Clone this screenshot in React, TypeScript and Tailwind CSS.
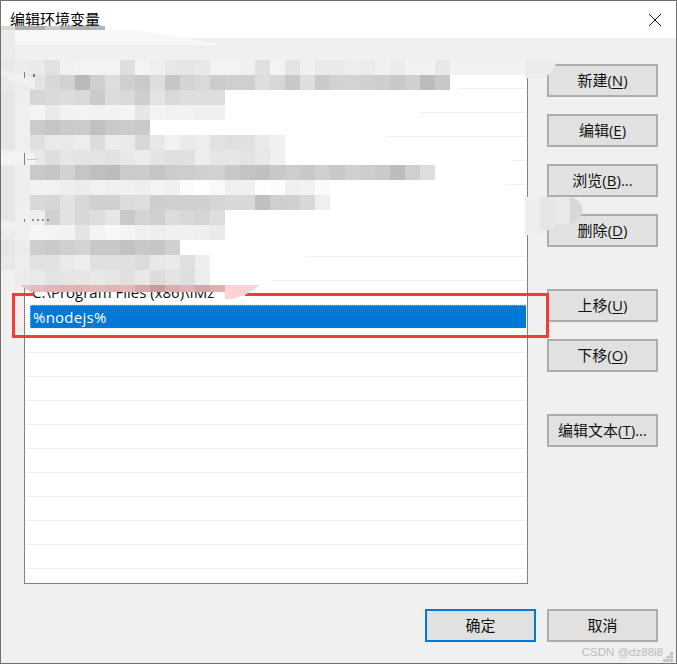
import { useState } from "react";

const FONT = "font-['Open_Sans','Noto_Sans_CJK_SC',sans-serif]";

// Pixelated privacy blur over the top of the list. 15px cells starting at x=0, grey levels in hex.
const MOSAIC: { y: number; cells: string }[] = [
  { y: 60, cells: "e8 ec ea e1 f1 f3 f3 f3 de f3 ef e7 e5 e8 f3 f3 f0 e0 f3 e4 f0 ea ea ed eb f0 ec f2 f2 e8 f2 f2 f2 f2 f2" },
  { y: 75, cells: "e8 ec e3 d8 d2 ba cf dd d0 ca de c6 d4 d9 cc cf cf dd d7 c8 de ca d2 d3 d0 ce c8 d0 bc c8" },
  { y: 90, cells: "e6 ee d5 d9 dc d9 ca dc d9 ce e3 d9 de de dd" },
  { y: 105, cells: "e6 ef f4 ea f2 f3 f1 f2 f4 e6 f3 f1 f2 f0 f0" },
  { y: 120, cells: "e6 ef cb c5 ca cc c1 ca cc ca" },
  { y: 135, cells: "e6 ef e0 e9 e9 ed dc ec e9 d8 e8 f1 ea ed e2 df e0 ea f0" },
  { y: 150, cells: "f0 f0 e8 dd e6 e4 e4 e2 e8 ec e4 df e0 ed e5 e6 e3 e8 f0" },
  { y: 165, cells: "e6 ee c9 c6 d2 c5 bf bc cb cc c5 cc cd d0 d1 c8 c3 c0 c8 cd c8 d0 c8 d0 cd ca bc cf dd" },
  { y: 180, cells: "e6 ee f2 f1 ee ec f1 ef f0 ee f3 f0 fc fe f9 ef f0 fe fc f0 f1 fa" },
  { y: 195, cells: "e6 ee d8 d6 e2 d8 d0 d0 dc de ce d0 cf d0 d5 d8 d8 c0 cf d0 d8 ef" },
  { y: 210, cells: "e6 f0 ee d0 e2 d8 dd e6 c9 d4 cf dc d8 d5 dd" },
  { y: 225, cells: "ec f0 f6 f4 f2 e4 f3 f8 f4 f0 ee f0 f0 ee ea" },
  { y: 240, cells: "e6 ec ce ca cf d4 c8 c8 c2 c8 c6 d0" },
  { y: 255, cells: "e8 ee e2 e2 ea ee df df e0 dc e8 ea e0 ee" },
  { y: 270, cells: "f0 ec e9 e3 e5 e6 e8 e6 e0 e8 dc e3 de ed" },
];

const TOP_STRIP = ["d8", "ad", "ad", "c8", "b0", "ad", "b5"];
const PINK = ["e4bcbc", "e2b6b6", "e2b4b4", "e0b2b2", "e4b8b8", "e0b2b2", "e4b8b8", "d8a8a8", "c99c9c", "dcaeae", "deb4b4", "d4a8a8", "deb0b0", "e2b8b8"];

// Stretches of the white smear that hide the row separators
const SMEARS: [number, number, number][] = [
  [88, 225, 458],
  [112, 225, 420],
  [136, 150, 386],
  [160, 285, 512],
  [184, 330, 505],
  [208, 330, 526],
  [232, 225, 526],
  [256, 180, 305],
  [280, 210, 271],
];

function Overlay() {
  return (
    <svg className="absolute -left-px -top-px pointer-events-none" width="677" height="664" viewBox="0 0 677 664">
      {SMEARS.map(([y, x1, x2]) => (
        <rect key={y} x={x1} y={y} width={x2 - x1} height="1" fill="#fff" />
      ))}

      {/* top smear, under the title */}
      <rect x="0" y="30" width="15" height="30" fill="#ebebeb" />
      <polygon points="15,30 135,30 225,45 15,45" fill="#f7f7f7" />
      {TOP_STRIP.map((v, i) => (
        <rect key={i} x={i * 15} y="26" width="15" height="4" fill={`#${v}${v}${v}`} />
      ))}

      {MOSAIC.map((row) =>
        row.cells.split(" ").map((v, i) => (
          <rect key={`${row.y}-${i}`} x={i * 15} y={row.y} width="15" height="15" fill={`#${v}${v}${v}`} />
        ))
      )}

      {/* patches at the edge of the list */}
      <polygon points="525,60 558,60 553,70 545,78 525,78" fill="#ececec" />
      <rect x="525" y="197" width="15" height="38" fill="#eeeeee" />
      <rect x="540" y="197" width="15" height="33" fill="#e6e6e6" />
      <path d="M555 197H570V224H555Z" fill="#e9e9e9" />
      <path d="M570 197C578 198 583 204 583 212L575 222L570 224Z" fill="#d8d8d8" />

      {/* bits of the window that show through the blur */}
      <rect x="0" y="220" width="1" height="18" fill="#707070" />
      <rect x="0" y="268" width="1" height="32" fill="#707070" />
      <polygon points="0,225 8,235 20,222 1,220" fill="#f0f0f0" />
      <polygon points="0,70 35,78 35,90 0,75" fill="#f0f0f0" />
      <rect x="24" y="72" width="1" height="6" fill="#808088" />
      <rect x="33" y="74" width="2" height="3" fill="#8a7a50" />
      <rect x="0" y="153" width="35" height="12" fill="#f3f3f3" />
      <rect x="24" y="153" width="1" height="12" fill="#808088" />
      <rect x="27" y="159" width="10" height="1" fill="#c8c8c8" />
      <rect x="24" y="219" width="1" height="3" fill="#808088" />
      <path d="M32 220H49" stroke="#3a3a3a" strokeWidth="1" strokeDasharray="2 3" fill="none" />

      {/* red annotation box, top edge is wiped where the smear runs over it */}
      <path d="M34 294.5H13.5V336.5H547.5V294.5H245" fill="none" stroke="#f23b3b" strokeWidth="3" />

      {/* pink cells where the blur crosses the red box */}
      <polygon points="30,285 20,285 27,290 33,292 30,292" fill="#e8c6c6" />
      {PINK.map((c, i) => (
        <rect key={c + i} x={30 + i * 15} y="285" width="15" height="7" fill={`#${c}`} />
      ))}
      <polygon points="225,285 260,285 245,295 232,299 225,299" fill="#ffd3d3" />
    </svg>
  );
}

function Btn({ label, hot, rest = ")", primary = false }: { label: string; hot?: string; rest?: string; primary?: boolean }) {
  return (
    <button
      className={`w-[111px] h-[33px] shrink-0 bg-[#e1e1e1] border-2 text-[15px] text-[#111] flex items-center justify-center ${
        primary ? "border-[#0078d7]" : "border-[#adadad]"
      }`}
    >
      {label}
      {hot && (
        <>
          (<span className="underline underline-offset-2">{hot}</span>
          {rest}
        </>
      )}
    </button>
  );
}

export default function App() {
  const [selected] = useState(10);
  const rows = Array.from({ length: 21 });

  return (
    <div className={`relative w-[677px] h-[664px] bg-[#f0f0f0] border border-[#707070] overflow-hidden ${FONT}`}>
      {/* Title bar */}
      <div className="h-[37px] bg-white flex items-center justify-between pl-[9px] pr-[15px]">
        <span className="text-[15px] text-black">编辑环境变量</span>
        <svg width="12" height="12" viewBox="0 0 12 12" className="stroke-[#111]">
          <path d="M0 0L12 12M12 0L0 12" fill="none" strokeWidth="1" />
        </svg>
      </div>

      {/* List + side buttons */}
      <div className="flex pl-[23px] pt-[26px] gap-[19px]">
        <div className="w-[504px] h-[520px] bg-white border border-[#808088] overflow-hidden">
          {rows.map((_, i) => (
            <div key={i} className="h-6 mx-px border-b border-[#f0f0f0] text-[15px] leading-[23px] text-[#111]">
              {i === 9 && <span className="pl-1.5 block">C:\Program Files (x86)\IMz</span>}
              {i === selected && (
                <div className="ml-1 h-[23px] pl-0.5 bg-[#0078d7] text-white tracking-[0.25px] border-t border-l border-dotted border-[#e0b070]">
                  %nodejs%
                </div>
              )}
            </div>
          ))}
        </div>

        <div className="flex flex-col">
          <Btn label="新建" hot="N" />
          <div className="mt-[17px]"><Btn label="编辑" hot="E" /></div>
          <div className="mt-[17px]"><Btn label="浏览" hot="B" rest=")..." /></div>
          <div className="mt-[17px]"><Btn label="删除" hot="D" /></div>
          <div className="mt-[42px]"><Btn label="上移" hot="U" /></div>
          <div className="mt-[17px]"><Btn label="下移" hot="O" /></div>
          <div className="mt-[42px]"><Btn label="编辑文本" hot="T" rest=")..." /></div>
        </div>
      </div>

      {/* Footer */}
      <div className="flex justify-end gap-[11px] pt-[25px] pr-[18px]">
        <Btn label="确定" primary />
        <Btn label="取消" />
      </div>

      <Overlay />

      {/* Watermark */}
      <span className="absolute right-[13px] bottom-[4px] text-[11.5px] leading-[14px] text-[#bcbcbc] font-['Liberation_Sans',sans-serif]">
        CSDN @dz88i8
      </span>
      <svg className="absolute right-[2px] bottom-[1px]" width="11" height="10" viewBox="0 0 11 10" fill="#c4c4c4">
        <rect x="7" y="0" width="3" height="3" />
        <rect x="3.5" y="3.5" width="3" height="3" />
        <rect x="7" y="3.5" width="3" height="3" />
        <rect x="0" y="7" width="3" height="3" />
        <rect x="3.5" y="7" width="3" height="3" />
        <rect x="7" y="7" width="3" height="3" />
      </svg>
    </div>
  );
}
